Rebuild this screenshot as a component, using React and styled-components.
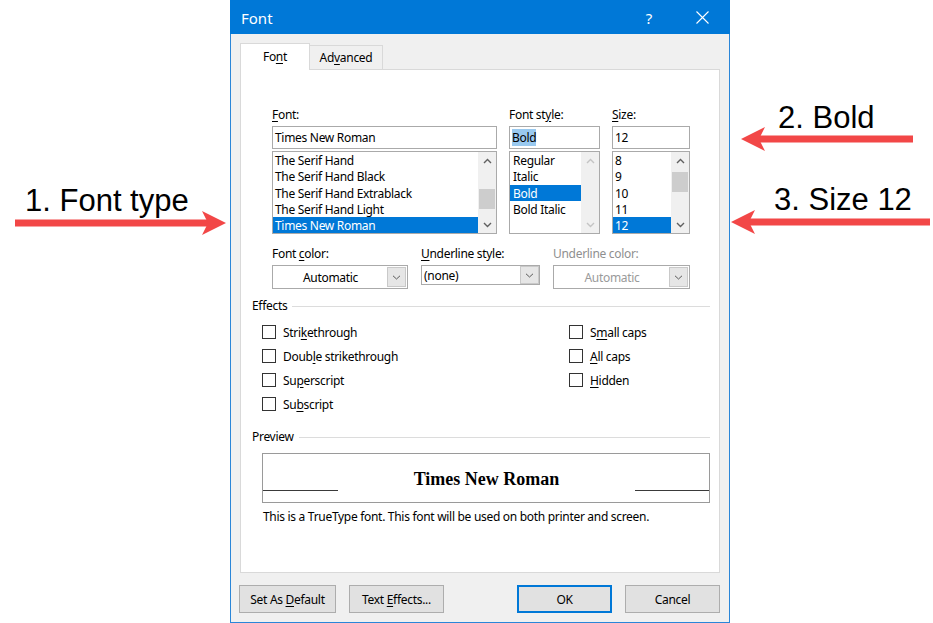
import React from "react";
import styled, { createGlobalStyle } from "styled-components";

const GlobalStyle = createGlobalStyle`
  html, body {
    margin: 0;
    padding: 0;
    background: #ffffff;
  }
  body {
    font-family: "Noto Sans", "Open Sans", sans-serif;
    font-size: 12px;
    letter-spacing: -0.3px;
    color: #000;
  }
`;

const Page = styled.div`
  display: grid;
  grid-template-columns: 230px 500px 203px;
  width: 933px;
  height: 623px;
  overflow: hidden;
`;

/* ---------- annotations beside the dialog ---------- */

const SideColumn = styled.div`
  display: flex;
  flex-direction: column;
  gap: 36px;
  padding-top: ${(p) => p.$top}px;
`;

const Note = styled.div`
  display: flex;
  flex-direction: column;
`;

const NoteText = styled.div`
  font-family: "Liberation Sans", Arial, sans-serif;
  font-size: 31px;
  line-height: 26px;
  letter-spacing: 0;
  color: #000;
  padding-left: ${(p) => p.$indent}px;
  white-space: nowrap;
`;

const ArrowSvg = styled.svg`
  display: block;
  margin-top: ${(p) => p.$lift}px;
`;

const Arrow = ({ width, tip, tail, lift }) => {
  const left = tip < tail;
  const d = left ? 1 : -1;
  const back = tip + d * 24;
  const notch = tip + d * 18;
  const sx = Math.min(notch, tail);
  const sw = Math.abs(tail - notch);
  return (
    <ArrowSvg width={width} height="24" $lift={lift}>
      <rect x={sx} y="8.5" width={sw} height="7" fill="#f24747" />
      <polygon
        points={`${tip},12 ${back},0 ${notch},12 ${back},24`}
        fill="#f24747"
      />
    </ArrowSvg>
  );
};

/* ---------- dialog frame ---------- */

const Dialog = styled.div`
  display: flex;
  flex-direction: column;
  box-sizing: border-box;
  height: 623px;
  background: #f0f0f0;
  border: 1px solid #2a86d8;
  border-top: none;
`;

const TitleBar = styled.div`
  display: flex;
  align-items: center;
  justify-content: space-between;
  height: 34px;
  margin: 0 -1px;
  padding: 1px 21px 0 11px;
  box-sizing: border-box;
  background: #0078d7;
  color: #fff;
`;

const TitleText = styled.span`
  font-size: 15px;
  letter-spacing: 0;
`;

const TitleControls = styled.div`
  display: flex;
  align-items: center;
  gap: 44px;
  font-size: 15px;
`;

const Body = styled.div`
  display: flex;
  flex-direction: column;
  flex: 1;
  padding: 9px;
`;

const TabRow = styled.div`
  display: flex;
  align-items: flex-end;
  height: 26px;
`;

const Tab = styled.div`
  position: relative;
  z-index: ${(p) => (p.$active ? 1 : 0)};
  box-sizing: border-box;
  display: flex;
  align-items: center;
  justify-content: center;
  width: ${(p) => p.$width}px;
  height: ${(p) => (p.$active ? 27 : 24)}px;
  margin-bottom: ${(p) => (p.$active ? -1 : 0)}px;
  background: ${(p) => (p.$active ? "#fff" : "#f0f0f0")};
  border: 1px solid #d9d9d9;
  border-bottom: none;
  border-left: ${(p) => (p.$active ? "1px solid #d9d9d9" : "none")};
  padding-bottom: ${(p) => (p.$active ? 1 : 0)}px;
`;

const Panel = styled.div`
  box-sizing: border-box;
  display: flex;
  flex-direction: column;
  height: 504px;
  background: #fff;
  border: 1px solid #d9d9d9;
  padding: 37px 9px 0 11px;
`;

const Key = styled.span`
  text-decoration: underline;
  text-underline-offset: 2px;
`;

const Label = styled.div`
  height: 16px;
  line-height: 16px;
  white-space: nowrap;
  color: ${(p) => (p.$disabled ? "#8f8f8f" : "#000")};
`;

/* ---------- font / style / size lists ---------- */

const TopGrid = styled.div`
  display: grid;
  grid-template-columns: 225px 91px 78px;
  column-gap: 12px;
  margin-left: 20px;
`;

const Field = styled.div`
  display: flex;
  flex-direction: column;
`;

const TextInput = styled.div`
  box-sizing: border-box;
  display: flex;
  align-items: center;
  height: 23px;
  margin-top: 3px;
  padding-left: 2px;
  border: 1px solid #aaaaaa;
  background: #fff;
  white-space: nowrap;
`;

const Highlight = styled.span`
  background: #99c9ef;
  line-height: 17px;
`;

const ListBox = styled.div`
  box-sizing: border-box;
  display: flex;
  height: 83px;
  margin-top: 2px;
  border: 1px solid #aaaaaa;
  background: #fff;
  overflow: hidden;
`;

const Items = styled.div`
  flex: 1;
  display: flex;
  flex-direction: column;
  min-width: 0;
`;

const Item = styled.div`
  height: 16.25px;
  line-height: 17px;
  flex-shrink: 0;
  padding-left: ${(p) => p.$pad}px;
  white-space: nowrap;
  background: ${(p) => (p.$selected ? "#0078d7" : "transparent")};
  color: ${(p) => (p.$selected ? "#fff" : "#000")};
`;

const ScrollBar = styled.div`
  display: flex;
  flex-direction: column;
  width: 18px;
  background: #f0f0f0;
`;

const ScrollButton = styled.div`
  display: flex;
  align-items: center;
  justify-content: center;
  height: 17px;
`;

const Track = styled.div`
  flex: 1;
`;

const Thumb = styled.div`
  height: ${(p) => p.$height}px;
  margin: ${(p) => p.$top}px 1px 0;
  background: #cdcdcd;
`;

const Chevron = ({ up, color = "#606060" }) => (
  <svg width="9" height="6" viewBox="0 0 9 6">
    <polyline
      points={up ? "1,5 4.5,1.5 8,5" : "1,1 4.5,4.5 8,1"}
      fill="none"
      stroke={color}
      strokeWidth="1.4"
    />
  </svg>
);

const Scroller = ({ disabled, thumbTop, thumbHeight }) => (
  <ScrollBar>
    <ScrollButton>
      <Chevron up color={disabled ? "#c4c4c4" : "#606060"} />
    </ScrollButton>
    <Track>
      {!disabled && <Thumb $top={thumbTop} $height={thumbHeight} />}
    </Track>
    <ScrollButton>
      <Chevron color={disabled ? "#c4c4c4" : "#606060"} />
    </ScrollButton>
  </ScrollBar>
);

const List = ({ items, selected, pad, disabled, thumbTop, thumbHeight }) => (
  <ListBox>
    <Items>
      {items.map((it) => (
        <Item key={it} $pad={pad} $selected={it === selected}>
          {it}
        </Item>
      ))}
    </Items>
    <Scroller disabled={disabled} thumbTop={thumbTop} thumbHeight={thumbHeight} />
  </ListBox>
);

/* ---------- dropdowns ---------- */

const DropRow = styled.div`
  display: grid;
  grid-template-columns: 136px 119px 137px;
  column-gap: 13px;
  align-items: start;
  margin: 12px 0 0 20px;
`;

const Combo = styled.div`
  box-sizing: border-box;
  display: flex;
  align-items: stretch;
  height: ${(p) => p.$height}px;
  margin-top: 3px;
  padding: ${(p) => p.$inset}px;
  border: 1px solid #aaaaaa;
  background: #fff;
  color: ${(p) => (p.$disabled ? "#9a9a9a" : "#000")};
`;

const ComboValue = styled.div`
  flex: 1;
  display: flex;
  align-items: center;
  justify-content: ${(p) => (p.$center ? "center" : "flex-start")};
  padding-left: ${(p) => (p.$center ? 0 : 2)}px;
  white-space: nowrap;
`;

const ComboButton = styled.div`
  box-sizing: border-box;
  display: flex;
  align-items: center;
  justify-content: center;
  width: 19px;
  background: #e6e6e6;
  border: 1px solid #c9c9c9;
`;

const DropChevron = () => (
  <svg width="9" height="5" viewBox="0 0 9 5">
    <polyline points="1,0.8 4.5,4 8,0.8" fill="none" stroke="#5a5a5a" strokeWidth="1" />
  </svg>
);

const Dropdown = ({ value, center, height, inset, disabled }) => (
  <Combo $height={height} $inset={inset} $disabled={disabled}>
    <ComboValue $center={center}>{value}</ComboValue>
    <ComboButton>
      <DropChevron />
    </ComboButton>
  </Combo>
);

/* ---------- effects & preview ---------- */

const SectionHeader = styled.div`
  display: flex;
  align-items: center;
  gap: 5px;
  height: 16px;
  margin-top: ${(p) => p.$gap}px;
  line-height: 16px;

  &::after {
    content: "";
    flex: 1;
    height: 1px;
    background: #dcdcdc;
  }
`;

const CheckGrid = styled.div`
  display: grid;
  grid-template-columns: 307px 1fr;
  grid-auto-flow: column;
  grid-template-rows: repeat(4, 24px);
  margin: 6px 0 0 10px;
`;

const CheckRow = styled.label`
  display: flex;
  align-items: center;
  gap: 7px;
  white-space: nowrap;
`;

const Box = styled.span`
  box-sizing: border-box;
  width: 14px;
  height: 14px;
  border: 1px solid #333;
  background: #fff;
`;

const PreviewBox = styled.div`
  box-sizing: border-box;
  display: grid;
  grid-template-columns: 75px 1fr 74px;
  align-items: center;
  width: 448px;
  height: 50px;
  margin: 8px 0 0 10px;
  border: 1px solid #9a9a9a;
`;

const PreviewLine = styled.span`
  height: 1px;
  margin-top: 24px;
  background: #3a3a3a;
`;

const PreviewText = styled.span`
  text-align: center;
  font-family: "Liberation Serif", "Times New Roman", serif;
  font-weight: bold;
  font-size: 18px;
  letter-spacing: 0;
  padding-top: 2px;
`;

const FontNote = styled.div`
  margin: 6px 0 0 11px;
  height: 16px;
  line-height: 16px;
  white-space: nowrap;
`;

/* ---------- buttons ---------- */

const ButtonRow = styled.div`
  display: flex;
  gap: 13px;
  margin: 12px 0 0 -1px;
`;

const Spacer = styled.div`
  flex: 1;
`;

const Button = styled.div`
  box-sizing: border-box;
  display: flex;
  align-items: center;
  justify-content: center;
  width: ${(p) => p.$width}px;
  height: 28px;
  background: #e1e1e1;
  border: 1px solid ${(p) => (p.$primary ? "#0078d7" : "#adadad")};
  box-shadow: ${(p) => (p.$primary ? "inset 0 0 0 1px #0078d7" : "none")};
  white-space: nowrap;
`;

const CloseIcon = () => (
  <svg width="13" height="13" viewBox="0 0 13 13">
    <path d="M0.5 0.5 L12.5 12.5 M12.5 0.5 L0.5 12.5" stroke="#fff" strokeWidth="1.1" />
  </svg>
);

const fonts = [
  "The Serif Hand",
  "The Serif Hand Black",
  "The Serif Hand Extrablack",
  "The Serif Hand Light",
  "Times New Roman",
];

export default function App() {
  return (
    <>
      <GlobalStyle />
      <Page>
        <SideColumn $top={188}>
          <Note>
            <NoteText $indent={25}>1. Font type</NoteText>
            <Arrow width={230} tail={15} tip={226} lift={-3} />
          </Note>
        </SideColumn>

        <Dialog>
          <TitleBar>
            <TitleText>Font</TitleText>
            <TitleControls>
              <span>?</span>
              <CloseIcon />
            </TitleControls>
          </TitleBar>
          <Body>
            <TabRow>
              <Tab $active $width={70}>
                <span>
                  Fo<Key>n</Key>t
                </span>
              </Tab>
              <Tab $width={73}>
                <span>
                  Ad<Key>v</Key>anced
                </span>
              </Tab>
            </TabRow>
            <Panel>
              <TopGrid>
                <Field>
                  <Label>
                    <Key>F</Key>ont:
                  </Label>
                  <TextInput>Times New Roman</TextInput>
                  <List items={fonts} selected="Times New Roman" pad={2} thumbTop={20} thumbHeight={20} />
                </Field>
                <Field>
                  <Label>
                    Font st<Key>y</Key>le:
                  </Label>
                  <TextInput>
                    <Highlight>Bold</Highlight>
                  </TextInput>
                  <List items={["Regular", "Italic", "Bold", "Bold Italic"]} selected="Bold" pad={3} disabled />
                </Field>
                <Field>
                  <Label>
                    <Key>S</Key>ize:
                  </Label>
                  <TextInput>12</TextInput>
                  <List items={["8", "9", "10", "11", "12"]} selected="12" pad={2} thumbTop={3} thumbHeight={20} />
                </Field>
              </TopGrid>

              <DropRow>
                <Field>
                  <Label>
                    Font <Key>c</Key>olor:
                  </Label>
                  <Dropdown value="Automatic" center height={24} inset={1} />
                </Field>
                <Field>
                  <Label>
                    <Key>U</Key>nderline style:
                  </Label>
                  <Dropdown value="(none)" height={20} inset={0} />
                </Field>
                <Field>
                  <Label $disabled>Underline color:</Label>
                  <Dropdown value="Automatic" center height={24} inset={1} disabled />
                </Field>
              </DropRow>

              <SectionHeader $gap={9}>Effects</SectionHeader>
              <CheckGrid>
                <CheckRow>
                  <Box />
                  <span>
                    Stri<Key>k</Key>ethrough
                  </span>
                </CheckRow>
                <CheckRow>
                  <Box />
                  <span>
                    Doub<Key>l</Key>e strikethrough
                  </span>
                </CheckRow>
                <CheckRow>
                  <Box />
                  <span>
                    Su<Key>p</Key>erscript
                  </span>
                </CheckRow>
                <CheckRow>
                  <Box />
                  <span>
                    Su<Key>b</Key>script
                  </span>
                </CheckRow>
                <CheckRow>
                  <Box />
                  <span>
                    S<Key>m</Key>all caps
                  </span>
                </CheckRow>
                <CheckRow>
                  <Box />
                  <span>
                    <Key>A</Key>ll caps
                  </span>
                </CheckRow>
                <CheckRow>
                  <Box />
                  <span>
                    <Key>H</Key>idden
                  </span>
                </CheckRow>
              </CheckGrid>

              <SectionHeader $gap={13}>Preview</SectionHeader>
              <PreviewBox>
                <PreviewLine />
                <PreviewText>Times New Roman</PreviewText>
                <PreviewLine />
              </PreviewBox>
              <FontNote>This is a TrueType font. This font will be used on both printer and screen.</FontNote>
            </Panel>

            <ButtonRow>
              <Button $width={97}>
                <span>
                  Set As <Key>D</Key>efault
                </span>
              </Button>
              <Button $width={95}>
                <span>
                  Text <Key>E</Key>ffects...
                </span>
              </Button>
              <Spacer />
              <Button $width={95} $primary>
                OK
              </Button>
              <Button $width={95}>Cancel</Button>
            </ButtonRow>
          </Body>
        </Dialog>

        <SideColumn $top={105}>
          <Note>
            <NoteText $indent={48}>2. Bold</NoteText>
            <Arrow width={203} tail={183} tip={11} lift={-4} />
          </Note>
          <Note>
            <NoteText $indent={44}>3. Size 12</NoteText>
            <Arrow width={203} tail={200} tip={1} lift={-3} />
          </Note>
        </SideColumn>
      </Page>
    </>
  );
}
